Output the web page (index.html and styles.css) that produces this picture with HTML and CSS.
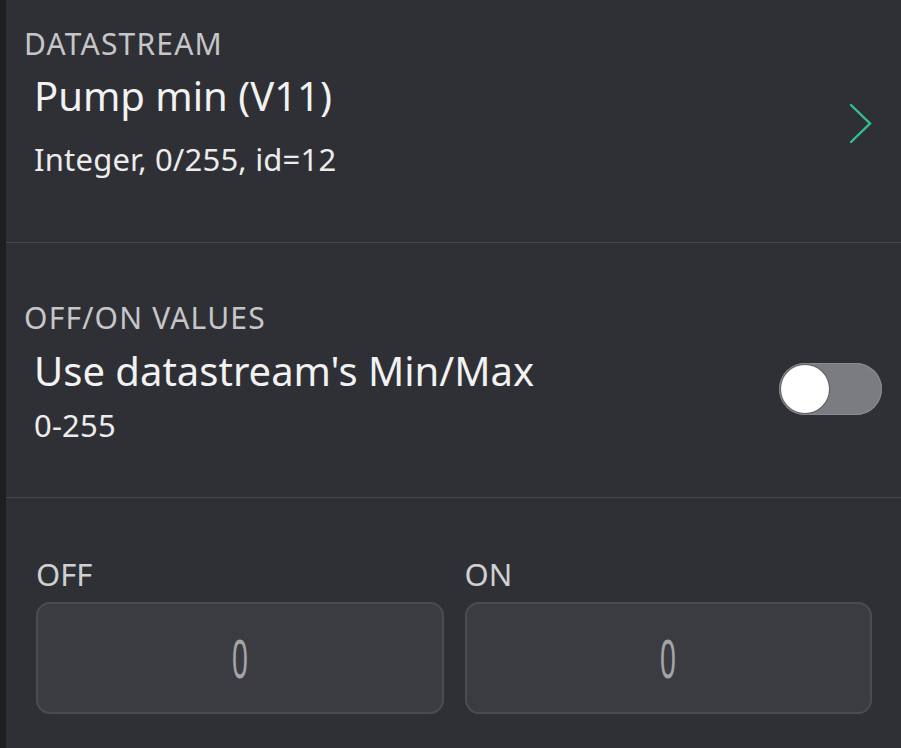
FILE: index.html
```html
<!DOCTYPE html>
<html>
<head>
<meta charset="utf-8">
<link rel="stylesheet" href="styles.css">
</head>
<body>
<div class="page">
  <div class="strip"></div>
  <div class="content">
    <section class="sec sec-ds">
      <div class="label">DATASTREAM</div>
      <div class="row">
        <div class="texts">
          <div class="title">Pump min (V11)</div>
          <div class="sub sub-ds">Integer, 0/255, id=12</div>
        </div>
        <svg class="chev" width="24" height="42" viewBox="0 0 24 42"><polyline points="2,2 21,20.5 2,39" fill="none" stroke="#34c08d" stroke-width="2.4" stroke-linecap="round" stroke-linejoin="miter"/></svg>
      </div>
    </section>
    <section class="sec sec-vals">
      <div class="label">OFF/ON VALUES</div>
      <div class="row">
        <div class="texts">
          <div class="title">Use datastream's Min/Max</div>
          <div class="sub sub-vals">0-255</div>
        </div>
        <div class="toggle"><div class="knob"></div></div>
      </div>
    </section>
    <section class="sec-inputs">
      <div class="field">
        <div class="flabel">OFF</div>
        <div class="box"><span class="num">0</span></div>
      </div>
      <div class="field">
        <div class="flabel">ON</div>
        <div class="box"><span class="num">0</span></div>
      </div>
    </section>
  </div>
</div>
</body>
</html>
```
FILE: styles.css
```css
html, body {
  margin: 0;
  padding: 0;
  background: #2f3035;
}
body {
  font-family: "Noto Sans", "Open Sans", sans-serif;
  color: #f0f0f0;
}
.page {
  display: flex;
  width: 901px;
  height: 748px;
  overflow: hidden;
}
.strip {
  width: 6px;
  flex: none;
  background: #1f1f1f;
}
.content {
  flex: 1;
  display: flex;
  flex-direction: column;
}
.sec {
  border-bottom: 1px solid #47484d;
  padding-left: 18px;
}
.sec-ds {
  height: 216px;
  padding-top: 26px;
}
.sec-vals {
  height: 197px;
  padding-top: 57px;
}
.label {
  font-size: 30px;
  letter-spacing: 1.2px;
  line-height: 36px;
  color: #c6c6c8;
}
.row {
  display: flex;
  align-items: center;
  justify-content: space-between;
  padding-left: 10px;
}
.title {
  font-size: 40px;
  line-height: 48px;
  color: #f2f2f2;
}
.sec-ds .title { margin-top: 10px; }
.sec-vals .title { margin-top: 11px; }
.sub {
  font-size: 31px;
  letter-spacing: 0.2px;
  line-height: 36px;
  color: #ececec;
}
.sub-ds { margin-top: 21px; }
.sub-vals { margin-top: 12px; }
.chev {
  margin-right: 28px;
  margin-top: 8px;
}
.toggle {
  width: 103px;
  height: 52px;
  border-radius: 26px;
  background: #7b7c81;
  box-shadow: inset 0 0 0 1px #8a8b90;
  margin-right: 19px;
  margin-top: -1px;
  display: flex;
  align-items: center;
  padding-left: 2px;
  box-sizing: border-box;
}
.knob {
  width: 48px;
  height: 48px;
  border-radius: 50%;
  background: #ffffff;
  box-shadow: 0 0 1px 1px rgba(0,0,0,0.25);
}
.sec-inputs {
  display: flex;
  gap: 21px;
  padding: 58px 29px 0 30px;
}
.field {
  flex: 1;
  display: flex;
  flex-direction: column;
}
.flabel {
  font-size: 31px;
  line-height: 36px;
  color: #d0d0d2;
}
.box {
  margin-top: 10px;
  height: 112px;
  box-sizing: border-box;
  border: 2px solid #4b4c51;
  border-radius: 14px;
  background: #3b3c41;
  display: flex;
  align-items: center;
  justify-content: center;
}
.num {
  display: inline-block;
  font-size: 52px;
  line-height: 52px;
  font-weight: 400;
  color: #a4a4a6;
  transform: scaleX(0.55);
}
```
